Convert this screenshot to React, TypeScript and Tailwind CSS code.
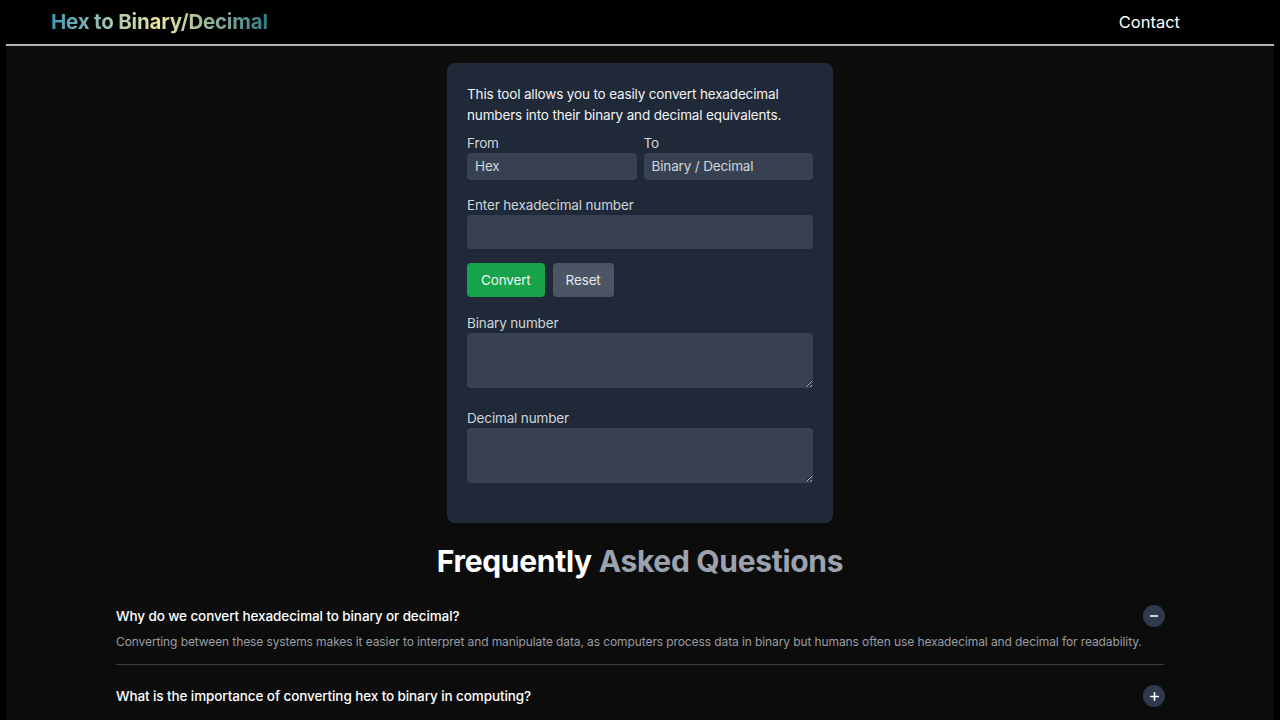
import { Minus, Plus } from "lucide-react";

const faqs = [
  {
    q: "Why do we convert hexadecimal to binary or decimal?",
    a: "Converting between these systems makes it easier to interpret and manipulate data, as computers process data in binary but humans often use hexadecimal and decimal for readability.",
    open: true,
  },
  {
    q: "What is the importance of converting hex to binary in computing?",
    a: "",
    open: false,
  },
];

function Field({ label, children }: { label: string; children: React.ReactNode }) {
  return (
    <label className="flex flex-col">
      <span className="text-[13.5px] leading-[20px] tracking-[-0.15px] text-gray-300">{label}</span>
      {children}
    </label>
  );
}

export default function App() {
  return (
    <div className="min-h-screen bg-black font-['Inter',sans-serif] text-white">
      <header className="flex h-[44px] items-center justify-between pl-[51px] pr-[100px]">
        <a className="bg-gradient-to-r from-[#3b9ab6] via-[#ece8a2] to-[#2a7c8b] bg-clip-text text-[20.5px] font-bold tracking-[-0.2px] text-transparent">
          Hex to Binary/Decimal
        </a>
        <a className="text-[16.5px] text-white">Contact</a>
      </header>

      <main className="mx-[6px] flex flex-col items-center border-t-2 border-[#b4b4b8] bg-[#0c0c0d] pt-[17px] pb-10">
        <section className="w-[386px] rounded-lg bg-[#1f2937] px-5 pt-[21px] pb-[40px]">
          <p className="text-[13.5px] leading-[21px] tracking-[-0.15px] text-gray-100">
            This tool allows you to easily convert hexadecimal numbers into their binary and decimal equivalents.
          </p>

          <div className="mt-[7px] grid grid-cols-2 gap-[7px]">
            <Field label="From">
              <div className="flex h-[27px] items-center rounded bg-[#374151] px-2 text-[13.5px] tracking-[-0.15px] text-gray-300">
                Hex
              </div>
            </Field>
            <Field label="To">
              <div className="flex h-[27px] items-center rounded bg-[#374151] px-2 text-[13.5px] tracking-[-0.15px] text-gray-300">
                Binary / Decimal
              </div>
            </Field>
          </div>

          <div className="mt-[15px]">
            <Field label="Enter hexadecimal number">
              <input className="h-[34px] w-full rounded bg-[#374151] px-2 text-[14px] text-gray-100 outline-none" />
            </Field>
          </div>

          <div className="mt-[14px] flex gap-2">
            <button className="h-[34px] rounded bg-[#16a34a] px-[14px] text-[13.5px] tracking-[-0.15px] text-gray-100" type="button">
              Convert
            </button>
            <button className="h-[34px] rounded bg-[#4b5563] px-[13px] text-[13.5px] tracking-[-0.15px] text-gray-200" type="button">
              Reset
            </button>
          </div>

          <div className="mt-[16px]">
            <Field label="Binary number">
              <textarea className="h-[55px] w-full resize-y rounded bg-[#374151] px-2 py-1 text-[14px] outline-none" />
            </Field>
          </div>

          <div className="mt-[20px]">
            <Field label="Decimal number">
              <textarea className="h-[55px] w-full resize-y rounded bg-[#374151] px-2 py-1 text-[14px] outline-none" />
            </Field>
          </div>
        </section>

        <h2 className="mt-[18px] text-[30px] font-bold leading-[40px] tracking-[-0.3px]">
          Frequently <span className="text-[#9ca3af]">Asked Questions</span>
        </h2>

        <div className="mt-[23px] w-[1048px]">
          {faqs.map((f, i) => (
            <div className={i < faqs.length - 1 ? "border-b border-[#3a3d44] pb-[12px]" : "pt-[19px]"} key={f.q}>
              <div className="flex items-center justify-between">
                <h3 className="text-[13.5px] font-medium leading-[24px] tracking-[-0.1px] text-white">{f.q}</h3>
                <span className="-mr-px flex size-[22px] items-center justify-center rounded-full bg-[#2f3a4b] text-white">
                  {f.open ? <Minus size={12} strokeWidth={3} /> : <Plus size={13} strokeWidth={3} />}
                </span>
              </div>
              {f.a ? (
                <p className="mt-[4px] text-[12px] leading-[20px] tracking-[-0.1px] text-[#9a9ca3]">{f.a}</p>
              ) : null}
            </div>
          ))}
        </div>
      </main>
    </div>
  );
}
